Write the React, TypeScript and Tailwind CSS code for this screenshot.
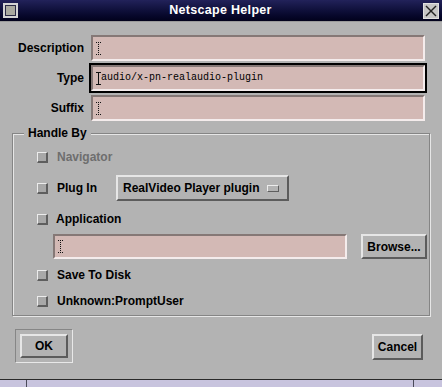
import React from "react";

const raised =
  "border-2 border-t-[#e6e6e6] border-l-[#e6e6e6] border-b-[#5c5c5c] border-r-[#5c5c5c] bg-[#b3b3b3]";
const sunkenInput =
  "border-2 border-t-[#857876] border-l-[#857876] border-b-[#f4ecec] border-r-[#f4ecec] bg-[#d3b9b5]";

function Cursor({ solid = false }: { solid?: boolean }) {
  return (
    <svg width="5" height="13" viewBox="0 0 5 13" className="shrink-0">
      <line x1="0" y1="0.5" x2="5" y2="0.5" stroke="#111" strokeWidth="1" strokeDasharray={solid ? undefined : "1 1"} />
      <line x1="2.5" y1="0" x2="2.5" y2="13" stroke="#111" strokeWidth="1" strokeDasharray={solid ? undefined : "1 1"} />
      <line x1="0" y1="12.5" x2="5" y2="12.5" stroke="#111" strokeWidth="1" strokeDasharray={solid ? undefined : "1 1"} />
    </svg>
  );
}

function Check() {
  return (
    <div className="w-[11px] h-[11px] shrink-0 border-t border-l border-t-[#ececec] border-l-[#ececec] border-b-2 border-r-2 border-b-[#5e5e5e] border-r-[#5e5e5e] bg-[#a8a8a8]" />
  );
}

function FieldRow({ label, focus, children }: { label: string; focus?: boolean; children?: React.ReactNode }) {
  return (
    <div className="flex items-center h-[30px]">
      <div className="w-[84px] text-right text-[12px] font-bold text-black leading-none">{label}</div>
      <div className={`ml-[5px] w-[338px] h-[30px] border-2 ${focus ? "border-black" : "border-transparent"}`}>
        <div className={`${sunkenInput} w-full h-full flex items-center pl-[3px]`}>{children}</div>
      </div>
    </div>
  );
}

export default function App() {
  return (
    <div className="w-[442px] h-[387px] bg-[#b3b3b3] flex flex-col overflow-hidden font-['Liberation_Sans',Arial,sans-serif] text-black">
      {/* Title bar */}
      <div className="h-[22px] shrink-0 bg-gradient-to-b from-[#22225a] to-[#02021c] flex items-center justify-between px-[3px] border-b border-[#9a9a9a]">
        <div className="w-[15px] h-[15px] border-2 border-[#d4d4d4] bg-[#2a2a44] p-[1px]">
          <div className="w-full h-full bg-[#a9a99f]" />
        </div>
        <div className="text-white font-bold text-[12.5px] tracking-[0.3px] leading-none">Netscape Helper</div>
        <div className="w-[16px] h-[16px] bg-[#c6c6c6] border border-[#e0e0e0] flex items-center justify-center">
          <svg width="12" height="12" viewBox="0 0 12 12">
            <line x1="1" y1="1" x2="11" y2="11" stroke="#222" strokeWidth="1.4" />
            <line x1="11" y1="1" x2="1" y2="11" stroke="#222" strokeWidth="1.4" />
          </svg>
        </div>
      </div>

      {/* Body */}
      <div className="flex-1 flex flex-col">
        <div className="mt-[11px] flex flex-col">
          <FieldRow label="Description">
            <Cursor />
          </FieldRow>
          <FieldRow label="Type" focus>
            <Cursor solid />
            <span className="font-['Liberation_Mono','Courier_New',monospace] text-[10px] leading-none">audio/x-pn-realaudio-plugin</span>
          </FieldRow>
          <FieldRow label="Suffix">
            <Cursor />
          </FieldRow>
        </div>

        {/* Handle By group */}
        <div className="relative mt-[10px] ml-[12px] w-[418px] h-[183px] border border-[#858585] shadow-[inset_1px_1px_0_#e6e6e6,1px_1px_0_#e6e6e6] pl-[24px] flex flex-col">
          <span className="absolute -top-[8px] left-[11px] px-[4px] bg-[#b3b3b3] text-[12px] font-bold leading-[14px]">Handle By</span>

          <div className="mt-[13px] h-[20px] flex items-center">
            <Check />
            <span className="ml-[9px] text-[12px] font-bold text-[#6e6e6e]">Navigator</span>
          </div>

          <div className="mt-[8px] h-[26px] flex items-center">
            <Check />
            <span className="ml-[9px] w-[59px] text-[12px] font-bold">Plug In</span>
            <div className={`${raised} w-[173px] h-[26px] flex items-center justify-between pl-[5px] pr-[8px]`}>
              <span className="text-[12px] font-bold">RealVideo Player plugin</span>
              <div className="w-[12px] h-[7px] border border-t-[#ececec] border-l-[#ececec] border-b-[#5e5e5e] border-r-[#5e5e5e] bg-[#b3b3b3]" />
            </div>
          </div>

          <div className="mt-[8px] h-[20px] flex items-center">
            <Check />
            <span className="ml-[8px] text-[12px] font-bold">Application</span>
          </div>

          <div className="mt-[5px] h-[25px] flex items-center ml-[16px]">
            <div className={`${sunkenInput} w-[294px] h-[25px] flex items-center pl-[3px]`}>
              <Cursor />
            </div>
            <div className={`${raised} ml-[14px] w-[66px] h-[25px] flex items-center justify-center text-[12px] font-bold`}>
              Browse...
            </div>
          </div>

          <div className="mt-[6px] h-[20px] flex items-center">
            <Check />
            <span className="ml-[9px] text-[12px] font-bold">Save To Disk</span>
          </div>

          <div className="mt-[6px] h-[20px] flex items-center">
            <Check />
            <span className="ml-[9px] text-[12px] font-bold">Unknown:PromptUser</span>
          </div>
        </div>

        {/* Bottom buttons */}
        <div className="mt-[13px] flex items-start justify-between pl-[15px] pr-[19px]">
          <div className="w-[58px] h-[34px] border border-t-[#868686] border-l-[#868686] border-b-[#e8e8e8] border-r-[#e8e8e8] p-[4px]">
            <div className={`${raised} w-full h-[24px] flex items-center justify-center text-[12px] font-bold`}>OK</div>
          </div>
          <div className={`${raised} mt-[5px] w-[51px] h-[26px] flex items-center justify-center text-[12px] font-bold`}>Cancel</div>
        </div>
      </div>

      {/* Bottom strip */}
      <div className="h-[8px] shrink-0 border-t border-[#2a2a2a] bg-[#c8c4de] flex">
        <div className="w-[27px] border-r border-[#4a4a5a]" />
        <div className="w-[387px] border-r border-[#4a4a5a]" />
        <div className="flex-1" />
      </div>
    </div>
  );
}
